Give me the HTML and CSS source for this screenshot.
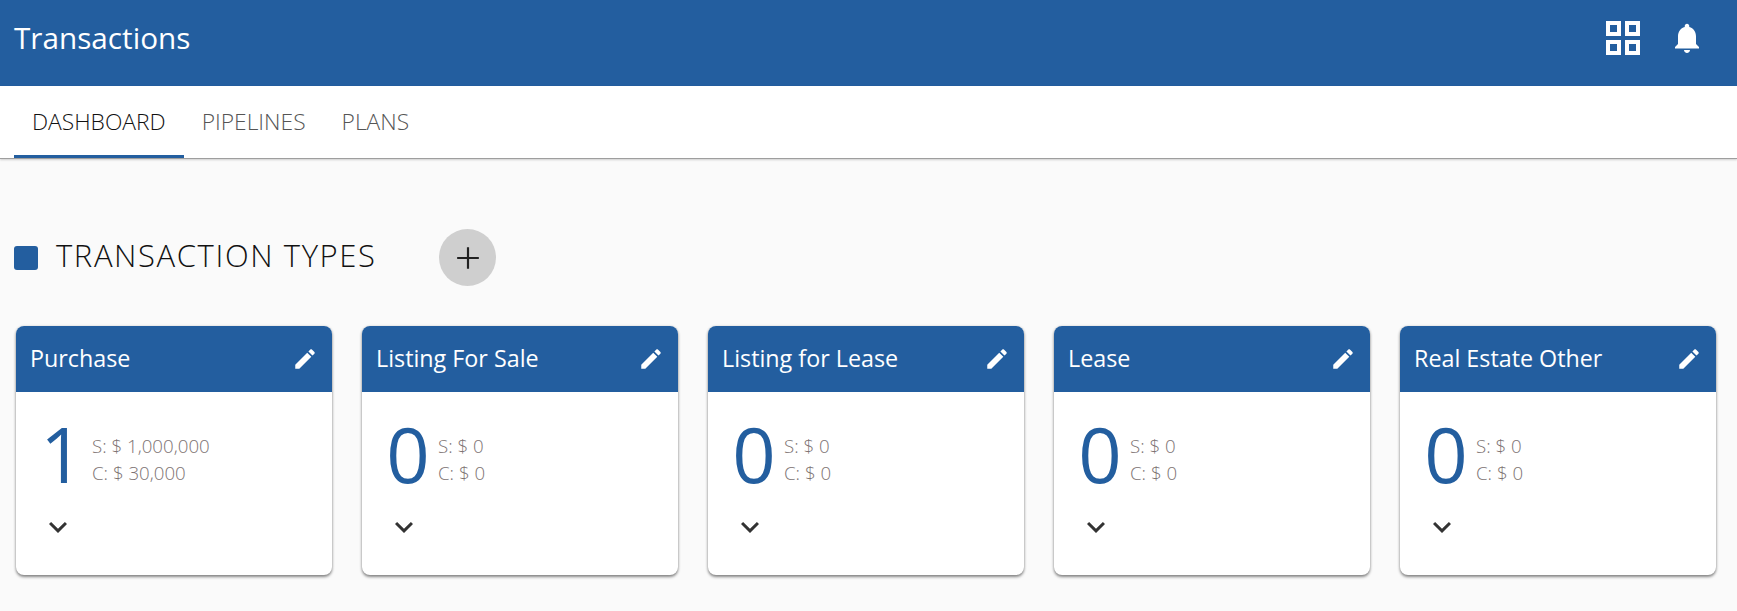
FILE: index.html
```html
<!DOCTYPE html>
<html lang="en">
<head>
<meta charset="utf-8">
<title>Transactions</title>
<link rel="stylesheet" href="styles.css">
</head>
<body>
<header class="topbar">
  <h1 class="topbar-title">Transactions</h1>
  <div class="topbar-icons">
    <svg class="icon-grid" viewBox="0 0 34 34" width="34" height="34" aria-hidden="true"><path fill="#fff" fill-rule="evenodd" d="M0 0h15v15H0zM4 4v7h7V4zM19 0h15v15H19zM23 4v7h7V4zM0 19h15v15H0zM4 23v7h7v-7zM19 19h15v15H19zM23 23v7h7v-7z"/></svg>
    <svg class="icon-bell" viewBox="0 0 24 24" width="36" height="36" aria-hidden="true"><path fill="#fff" d="M12 22c1.100 0 2-.9 2-2h-4c0 1.100.9 2 2 2zm6-6v-5c0-3.070-1.630-5.640-4.500-6.320V4c0-.83-.67-1.500-1.500-1.500s-1.500.67-1.500 1.500v.68C7.640 5.360 6 7.920 6 11v5l-2 2v1h16v-1l-2-2z"/></svg>
  </div>
</header>
<nav class="tabs">
  <a class="tab tab-active">DASHBOARD</a>
  <a class="tab">PIPELINES</a>
  <a class="tab">PLANS</a>
</nav>
<main class="content">
  <section class="section-head">
    <span class="section-mark"></span>
    <h2 class="section-title">TRANSACTION TYPES</h2>
    <button class="add-btn" aria-label="Add"><svg viewBox="0 0 24 24" width="26" height="26"><path fill="#212121" d="M22 13h-9v9h-2v-9H2v-2h9V2h2v9h9z"/></svg></button>
  </section>
  <section class="cards">
    <article class="card">
      <div class="card-head"><span class="card-name">Purchase</span><svg class="pencil" viewBox="0 0 24 24" width="26" height="26"><path fill="#fff" d="M3 17.250V21h3.750L17.810 9.940l-3.750-3.750L3 17.250zM20.710 7.040c.39-.39.39-1.020 0-1.410l-2.340-2.340c-.39-.39-1.020-.39-1.410 0l-1.830 1.830 3.750 3.750 1.830-1.830z"/></svg></div>
      <div class="card-body">
        <div class="stats"><span class="count">1</span><div class="amounts"><div>S: $ 1,000,000</div><div>C: $ 30,000</div></div></div>
        <svg class="chevron" viewBox="0 0 24 24" width="36" height="36"><path fill="#333" d="M7.410 8.590 12 13.170l4.590-4.580L18 10l-6 6-6-6z"/></svg>
      </div>
    </article>
    <article class="card">
      <div class="card-head"><span class="card-name">Listing For Sale</span><svg class="pencil" viewBox="0 0 24 24" width="26" height="26"><path fill="#fff" d="M3 17.250V21h3.750L17.810 9.940l-3.750-3.750L3 17.250zM20.710 7.040c.39-.39.39-1.020 0-1.410l-2.340-2.340c-.39-.39-1.020-.39-1.410 0l-1.830 1.830 3.750 3.750 1.830-1.830z"/></svg></div>
      <div class="card-body">
        <div class="stats"><span class="count">0</span><div class="amounts"><div>S: $ 0</div><div>C: $ 0</div></div></div>
        <svg class="chevron" viewBox="0 0 24 24" width="36" height="36"><path fill="#333" d="M7.410 8.590 12 13.170l4.590-4.580L18 10l-6 6-6-6z"/></svg>
      </div>
    </article>
    <article class="card">
      <div class="card-head"><span class="card-name">Listing for Lease</span><svg class="pencil" viewBox="0 0 24 24" width="26" height="26"><path fill="#fff" d="M3 17.250V21h3.750L17.810 9.940l-3.750-3.750L3 17.250zM20.710 7.040c.39-.39.39-1.020 0-1.410l-2.340-2.340c-.39-.39-1.020-.39-1.410 0l-1.830 1.830 3.750 3.750 1.830-1.830z"/></svg></div>
      <div class="card-body">
        <div class="stats"><span class="count">0</span><div class="amounts"><div>S: $ 0</div><div>C: $ 0</div></div></div>
        <svg class="chevron" viewBox="0 0 24 24" width="36" height="36"><path fill="#333" d="M7.410 8.590 12 13.170l4.590-4.580L18 10l-6 6-6-6z"/></svg>
      </div>
    </article>
    <article class="card">
      <div class="card-head"><span class="card-name">Lease</span><svg class="pencil" viewBox="0 0 24 24" width="26" height="26"><path fill="#fff" d="M3 17.250V21h3.750L17.810 9.940l-3.750-3.750L3 17.250zM20.710 7.040c.39-.39.39-1.020 0-1.410l-2.340-2.340c-.39-.39-1.020-.39-1.410 0l-1.830 1.830 3.750 3.750 1.830-1.830z"/></svg></div>
      <div class="card-body">
        <div class="stats"><span class="count">0</span><div class="amounts"><div>S: $ 0</div><div>C: $ 0</div></div></div>
        <svg class="chevron" viewBox="0 0 24 24" width="36" height="36"><path fill="#333" d="M7.410 8.590 12 13.170l4.590-4.580L18 10l-6 6-6-6z"/></svg>
      </div>
    </article>
    <article class="card">
      <div class="card-head"><span class="card-name">Real Estate Other</span><svg class="pencil" viewBox="0 0 24 24" width="26" height="26"><path fill="#fff" d="M3 17.250V21h3.750L17.810 9.940l-3.750-3.750L3 17.250zM20.710 7.040c.39-.39.39-1.020 0-1.410l-2.340-2.340c-.39-.39-1.020-.39-1.410 0l-1.830 1.830 3.750 3.750 1.830-1.830z"/></svg></div>
      <div class="card-body">
        <div class="stats"><span class="count">0</span><div class="amounts"><div>S: $ 0</div><div>C: $ 0</div></div></div>
        <svg class="chevron" viewBox="0 0 24 24" width="36" height="36"><path fill="#333" d="M7.410 8.590 12 13.170l4.590-4.580L18 10l-6 6-6-6z"/></svg>
      </div>
    </article>
  </section>
</main>
</body>
</html>
```
FILE: styles.css
```css
* { box-sizing: border-box; }
html, body { margin: 0; height: 100%; }
body {
  background: #fafafa;
  font-family: "Open Sans", "Lato", sans-serif;
  color: #212121;
  overflow: hidden;
}
.topbar {
  height: 86px;
  background: #235e9f;
  color: #fff;
  display: flex;
  justify-content: space-between;
  align-items: flex-start;
  padding: 0 32px 0 14px;
}
.topbar-title {
  margin: 17px 0 0;
  font-size: 29.700px;
  line-height: 42px;
  font-weight: 400;
}
.topbar-icons {
  display: flex;
  align-items: center;
  gap: 29px;
  margin-top: 20px;
}
.tabs {
  height: 73px;
  background: #fff;
  display: flex;
  padding-left: 14px;
  border-bottom: 1px solid #9e9e9e;
  box-shadow: 0 1px 2px rgba(0,0,0,.18);
}
.tab {
  height: 72px;
  padding: 0 18px;
  font-size: 22.800px;
  font-weight: 300;
  line-height: 71px;
  color: #555;
}
.tab-active {
  color: #111;
  border-bottom: 3px solid #235e9f;
}
.content { padding: 70px 16px 0 14px; }
.section-head { display: flex; align-items: center; height: 57px; }
.section-mark {
  width: 24px;
  height: 24px;
  background: #235e9f;
  border-radius: 3px;
}
.section-title {
  margin: -5px 0 0 18px;
  width: 383px;
  font-size: 31px;
  font-weight: 300;
  letter-spacing: 1.600px;
  color: #111;
}
.add-btn {
  width: 57px;
  height: 57px;
  border: 0;
  border-radius: 50%;
  background: #cfcfcf;
  display: flex;
  align-items: center;
  justify-content: center;
  padding: 0;
}
.cards {
  margin: 40px 0 0 2px;
  display: flex;
  gap: 30px;
}
.card {
  width: 316px;
  height: 249px;
  background: #fff;
  border-radius: 8px;
  box-shadow: 0 2px 3px rgba(0,0,0,.45), 0 0 3px rgba(0,0,0,.12);
  overflow: hidden;
}
.card-head {
  height: 66px;
  background: #235e9f;
  color: #fff;
  display: flex;
  align-items: center;
  justify-content: space-between;
  padding: 0 14px;
}
.card-name { font-size: 23.300px; margin-top: -2px; }
.card-body { padding: 28px 0 0 20px; }
.stats { display: flex; align-items: center; height: 68px; }
.count {
  font-size: 76px;
  line-height: 68px;
  color: #235e9f;
  font-weight: 400;
  min-width: 52px;
  text-align: center;
}
.amounts {
  margin-left: 4px;
  padding-top: 10px;
  font-size: 18.700px;
  line-height: 27px;
  font-weight: 300;
  color: #7d7373;
}
.chevron { display: block; margin: 21px 0 0 4px; }
```
